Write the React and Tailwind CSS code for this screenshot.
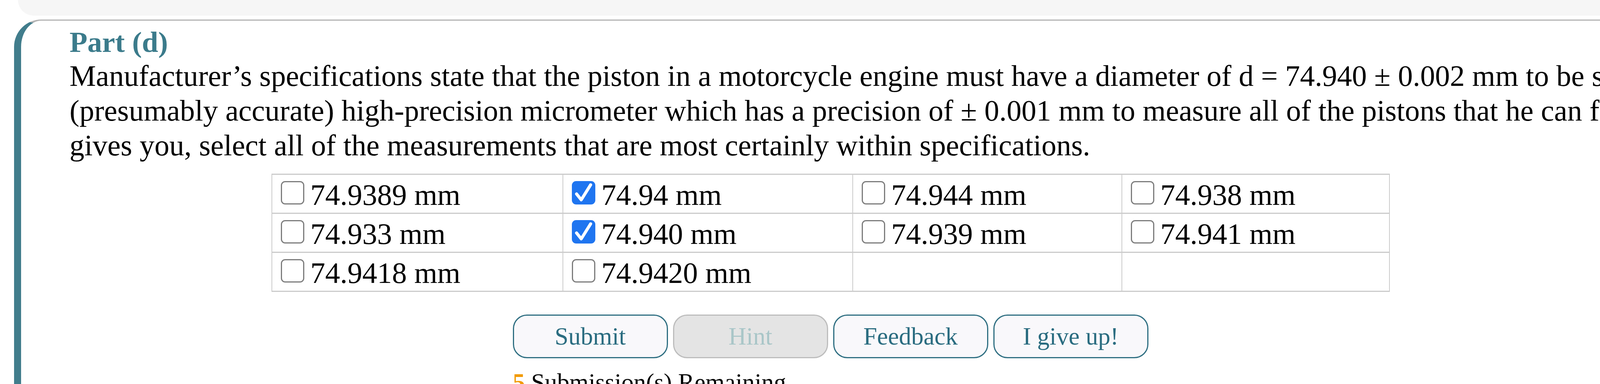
import React from "react";

const cols = ["w-[745px]", "w-[742px]", "w-[689px]", "w-[685px]"];
const rows = [
  [["74.9389 mm", false], ["74.94 mm", true], ["74.944 mm", false], ["74.938 mm", false]],
  [["74.933 mm", false], ["74.940 mm", true], ["74.939 mm", false], ["74.941 mm", false]],
  [["74.9418 mm", false], ["74.9420 mm", false], null, null],
];

function Box({ checked }) {
  if (checked) {
    return (
      <span className="mt-[16px] flex h-[60px] w-[60px] shrink-0 items-center justify-center rounded-[11px] bg-[#1f75f0]">
        <svg viewBox="0 0 100 100" className="h-[60px] w-[60px]">
          <path d="M20 55 L40 80 L80 16" fill="none" stroke="#ffffff" strokeWidth="13" strokeLinecap="round" strokeLinejoin="round" />
        </svg>
      </span>
    );
  }
  return <span className="mt-[16px] block h-[60px] w-[60px] shrink-0 rounded-[11px] border-[3px] border-[#7c7c7c] bg-white" />;
}

function Cell({ item, w }) {
  return (
    <div className={`${w} flex h-[100px] items-start border-b-[3px] border-r-2 border-[#cbcbcb] pl-[22px]`}>
      {item && (
        <>
          <Box checked={item[1]} />
          <span className="ml-[16px] mt-[13px] whitespace-nowrap text-[76px] leading-[76px] text-black">{item[0]}</span>
        </>
      )}
    </div>
  );
}

function Btn({ children, disabled }) {
  return (
    <div
      className={
        disabled
          ? "flex h-[112px] w-[397px] items-center justify-center rounded-[36px] border-[3px] border-[#bdbdbd] bg-[#e4e4e4] text-[63px] leading-none text-[#a9c6c8]"
          : "flex h-[112px] w-[397px] items-center justify-center rounded-[36px] border-[3px] border-[#2f6f82] bg-[#f9f8fb] text-[63px] leading-none text-[#2a6c80]"
      }
    >
      {children}
    </div>
  );
}

export default function App() {
  return (
    <div className="relative h-[984px] w-[4236px] overflow-hidden bg-white font-['Liberation_Serif',serif]">
      <div className="ml-[46px] h-[40px] rounded-bl-[40px] bg-[#f6f6f6]" />
      <div className="ml-[36px] mt-[10px] h-[1000px] rounded-tl-[70px] border-l-[18px] border-t-[3px] border-l-[#417d8c] border-t-[#b4b4b4] pl-[124px] pt-[17px]">
        <div className="h-[80px] text-[75px] font-bold leading-[75px] text-[#3b7b8b]">Part (d)</div>
        <div className="whitespace-nowrap text-[76px] leading-[89px] text-black">
          <div>Manufacturer’s specifications state that the piston in a motorcycle engine must have a diameter of d = 74.940 ± 0.002 mm to be serviceable.</div>
          <div>(presumably accurate) high-precision micrometer which has a precision of ± 0.001 mm to measure all of the pistons that he can find.</div>
          <div>gives you, select all of the measurements that are most certainly within specifications.</div>
        </div>
        <div className="flex w-[3896px] flex-col items-center">
          <div className="mt-[28px] flex flex-col border-l-2 border-t-[3px] border-[#cbcbcb]">
            {rows.map((r, i) => (
              <div key={i} className="flex">
                {r.map((item, j) => (
                  <Cell key={j} item={item} w={cols[j]} />
                ))}
              </div>
            ))}
          </div>
          <div className="mt-[58px] flex flex-col">
            <div className="flex gap-[13px]">
              <Btn>Submit</Btn>
              <Btn disabled>Hint</Btn>
              <Btn>Feedback</Btn>
              <Btn>I give up!</Btn>
            </div>
            <div className="mt-[27px] whitespace-nowrap text-[63px] leading-[70px] text-black">
              <span className="font-bold text-[#f29a00]">5</span> Submission(s) Remaining
            </div>
          </div>
        </div>
      </div>
    </div>
  );
}
